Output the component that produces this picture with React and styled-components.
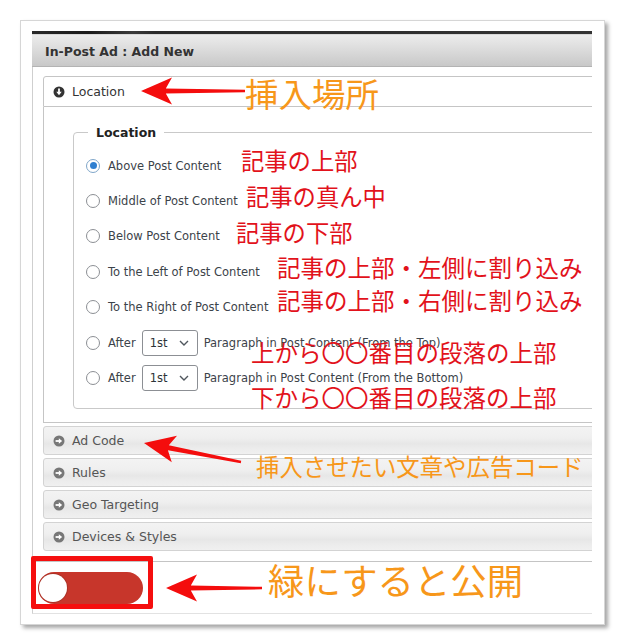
import React from 'react';
import styled, { createGlobalStyle } from 'styled-components';

const Global = createGlobalStyle`
  html, body { margin: 0; padding: 0; background: #fff; }
  body { font-family: "DejaVu Sans", Verdana, sans-serif; }
  * { box-sizing: border-box; }
`;

const Page = styled.div`
  position: relative;
  width: 624px;
  height: 644px;
  padding: 20px 0 0 20px;
  overflow: hidden;
`;

const Frame = styled.div`
  width: 585px;
  height: 605px;
  border: 1px solid #d6d6d6;
  box-shadow: 3px 3px 4px rgba(0, 0, 0, 0.35);
  background: #fff;
  padding: 10px 12px 0 11px;
`;

const Screen = styled.div`
  width: 560px;
  overflow: hidden;
  display: flex;
  flex-direction: column;
`;

const TopBar = styled.div`
  height: 3px;
  background: linear-gradient(to right, #2a2a2a 0%, #1a1a1a 10%, #3a3a3a 18%, #2b2b2b 22%, #333 100%);
`;

const Header = styled.div`
  height: 33px;
  padding: 2px 0 0 13px;
  display: flex;
  align-items: center;
  background: linear-gradient(to bottom, #ececec 0%, #dedede 40%, #c8c8c8 100%);
  border-top: 1px solid #d8d8d8;
  border-bottom: 1px solid #b3b3b3;
  font-weight: bold;
  font-size: 12.5px;
  color: #333;
`;

const MetaBody = styled.div`
  border-left: 1px solid #cfcfcf;
  border-bottom: 1px solid #c4c4c4;
  padding: 9px 0 10px 10px;
`;

const Accordion = styled.div`
  width: 620px;
  display: flex;
  flex-direction: column;
  gap: 3px;
`;

const OpenPanel = styled.div`
  display: flex;
  flex-direction: column;
`;

const PanelHead = styled.div`
  display: flex;
  align-items: center;
  gap: 7px;
  padding-left: 9px;
  border: 1px solid ${p => (p.$open ? '#c5c5c5' : '#d3d3d3')};
  border-radius: ${p => (p.$open ? '3px 3px 0 0' : '3px')};
  background: ${p =>
    p.$open
      ? '#fff'
      : 'linear-gradient(to bottom, #f3f3f3 0%, #efefef 40%, #e7e7e7 62%, #ececec 80%, #f0f0f0 100%)'};
  font-size: 12.5px;
  color: ${p => (p.$open ? '#333' : '#555')};
  height: ${p => (p.$open ? '31px' : '29px')};
`;

const PanelBody = styled.div`
  border: 1px solid #c5c5c5;
  border-top: none;
  height: 316px;
  padding: 18px 0 0 29px;
`;

const Fieldset = styled.fieldset`
  margin: 0;
  width: 560px;
  height: 284px;
  border: 1px solid #c9c9c9;
  border-radius: 4px;
  padding: 8px 0 0 12px;
`;

const Legend = styled.legend`
  margin-left: 2px;
  padding: 0 8px;
  font-size: 12.5px;
  font-weight: bold;
  color: #222;
  line-height: 15px;
`;

const RadioList = styled.div`
  display: flex;
  flex-direction: column;
`;

const Row = styled.div`
  height: 35.4px;
  display: flex;
  align-items: center;
  gap: 6px;
  font-size: 11.5px;
  color: #3c434a;
  white-space: nowrap;
`;

const Radio = styled.span`
  width: 14px;
  height: 14px;
  border-radius: 50%;
  border: 1px solid ${p => (p.$checked ? '#7fa6c9' : '#8c8f94')};
  background: #fff;
  margin-right: 2px;
  display: flex;
  align-items: center;
  justify-content: center;
  flex: none;
  &::before {
    content: '';
    width: 7px;
    height: 7px;
    border-radius: 50%;
    background: ${p => (p.$checked ? '#2f7fd0' : 'transparent')};
  }
`;

const Select = styled.div`
  width: 56px;
  height: 26px;
  border: 1px solid #8c8f94;
  border-radius: 3px;
  display: flex;
  align-items: center;
  justify-content: space-between;
  padding: 0 8px 0 7px;
  font-size: 11.5px;
  color: #2c3338;
`;

const ToggleRow = styled.div`
  height: 52px;
  border-left: 1px solid #cfcfcf;
  border-bottom: 1px solid #e2e2e2;
  display: flex;
  align-items: center;
  padding-left: 5px;
`;

const Toggle = styled.div`
  width: 105px;
  height: 32px;
  border-radius: 16px;
  background: #c7362b;
  display: flex;
  align-items: center;
  padding-left: 1px;
`;

const Knob = styled.span`
  width: 28px;
  height: 28px;
  border-radius: 50%;
  background: #fff;
  box-shadow: 0 0 0 1px rgba(120, 40, 30, 0.35);
`;

const Note = styled.span`
  position: absolute;
  left: ${p => p.$x}px;
  top: ${p => p.$y}px;
  font-family: "Noto Sans CJK JP", sans-serif;
  font-size: ${p => p.$size}px;
  line-height: 1;
  color: ${p => (p.$orange ? '#f7971a' : '#e2121b')};
  white-space: nowrap;
  transform: translateY(-50%);
`;

const Highlight = styled.div`
  position: absolute;
  left: 31px;
  top: 556px;
  width: 122px;
  height: 53px;
  border: 5px solid #f50f0f;
  border-radius: 2px;
`;

const Overlay = styled.svg`
  position: absolute;
  left: 0;
  top: 0;
  pointer-events: none;
`;

const ArrowDown = ({ color }) => (
  <svg width="12" height="12" viewBox="0 0 12 12">
    <circle cx="6" cy="6" r="5.5" fill={color} />
    <path d="M6 2.6 V6.5" stroke="#fff" strokeWidth="1.8" />
    <path d="M3.3 5.8 H8.7 L6 9.2 Z" fill="#fff" />
  </svg>
);

const ArrowRight = ({ color }) => (
  <svg width="12" height="12" viewBox="0 0 12 12">
    <circle cx="6" cy="6" r="5.5" fill={color} />
    <path d="M2.6 6 H6.5" stroke="#fff" strokeWidth="1.8" />
    <path d="M5.8 3.3 V8.7 L9.2 6 Z" fill="#fff" />
  </svg>
);

const Chevron = () => (
  <svg width="10" height="6" viewBox="0 0 10 6">
    <path d="M1 1 L5 5 L9 1" fill="none" stroke="#50575e" strokeWidth="1.4" />
  </svg>
);

function arrowPoints(tail, tip, headLen, headHalf, shaftHead, shaftTail) {
  const dx = tip[0] - tail[0];
  const dy = tip[1] - tail[1];
  const len = Math.hypot(dx, dy);
  const ux = dx / len;
  const uy = dy / len;
  const nx = -uy;
  const ny = ux;
  const at = (d, off) => [tip[0] - ux * d + nx * off, tip[1] - uy * d + ny * off];
  const pts = [
    tip,
    at(headLen, headHalf),
    at(headLen * 0.8, shaftHead / 2),
    [tail[0] + nx * shaftTail / 2, tail[1] + ny * shaftTail / 2],
    [tail[0] - nx * shaftTail / 2, tail[1] - ny * shaftTail / 2],
    at(headLen * 0.8, -shaftHead / 2),
    at(headLen, -headHalf),
  ];
  return pts.map(p => p.map(v => v.toFixed(1)).join(',')).join(' ');
}

const arrows = [
  { tail: [245, 91], tip: [141, 91] },
  { tail: [241, 462], tip: [144, 443] },
  { tail: [262, 588], tip: [166, 588] },
];

const positions = [
  { label: 'Above Post Content', checked: true },
  { label: 'Middle of Post Content' },
  { label: 'Below Post Content' },
  { label: 'To the Left of Post Content' },
  { label: 'To the Right of Post Content' },
];

const paragraphRows = [
  'Paragraph in Post Content (From the Top)',
  'Paragraph in Post Content (From the Bottom)',
];

const collapsed = ['Ad Code', 'Rules', 'Geo Targeting', 'Devices & Styles'];

const notes = [
  { text: '挿入場所', x: 245, y: 93, size: 33.5, orange: true },
  { text: '記事の上部', x: 241, y: 161, size: 23.3 },
  { text: '記事の真ん中', x: 246, y: 197, size: 23.3 },
  { text: '記事の下部', x: 236, y: 233, size: 23.3 },
  { text: '記事の上部・左側に割り込み', x: 277, y: 268, size: 23.5 },
  { text: '記事の上部・右側に割り込み', x: 277, y: 301, size: 23.5 },
  { text: '上から〇〇番目の段落の上部', x: 251, y: 353, size: 23.5 },
  { text: '下から〇〇番目の段落の上部', x: 251, y: 398, size: 23.5 },
  { text: '挿入させたい文章や広告コード', x: 256, y: 467, size: 23.4, orange: true },
  { text: '緑にすると公開', x: 268, y: 579, size: 36.4, orange: true },
];

export default function App() {
  return (
    <Page>
      <Global />
      <Frame>
        <Screen>
          <TopBar />
          <Header>In-Post Ad : Add New</Header>
          <MetaBody>
            <Accordion>
              <OpenPanel>
                <PanelHead $open>
                  <ArrowDown color="#333" />
                  Location
                </PanelHead>
                <PanelBody>
                  <Fieldset>
                    <Legend>Location</Legend>
                    <RadioList>
                      {positions.map(p => (
                        <Row key={p.label}>
                          <Radio $checked={p.checked} />
                          {p.label}
                        </Row>
                      ))}
                      {paragraphRows.map(t => (
                        <Row key={t}>
                          <Radio />
                          After
                          <Select>
                            1st
                            <Chevron />
                          </Select>
                          {t}
                        </Row>
                      ))}
                    </RadioList>
                  </Fieldset>
                </PanelBody>
              </OpenPanel>
              {collapsed.map(c => (
                <PanelHead key={c}>
                  <ArrowRight color="#777" />
                  {c}
                </PanelHead>
              ))}
            </Accordion>
          </MetaBody>
          <ToggleRow>
            <Toggle>
              <Knob />
            </Toggle>
          </ToggleRow>
        </Screen>
      </Frame>
      <Highlight />
      <Overlay width="624" height="644" viewBox="0 0 624 644">
        {arrows.map((a, i) => (
          <polygon key={i} points={arrowPoints(a.tail, a.tip, 31, 13.5, 5, 2.5)} fill="#f40d0d" />
        ))}
      </Overlay>
      {notes.map(n => (
        <Note key={n.text} $x={n.x} $y={n.y} $size={n.size} $orange={n.orange}>
          {n.text}
        </Note>
      ))}
    </Page>
  );
}
